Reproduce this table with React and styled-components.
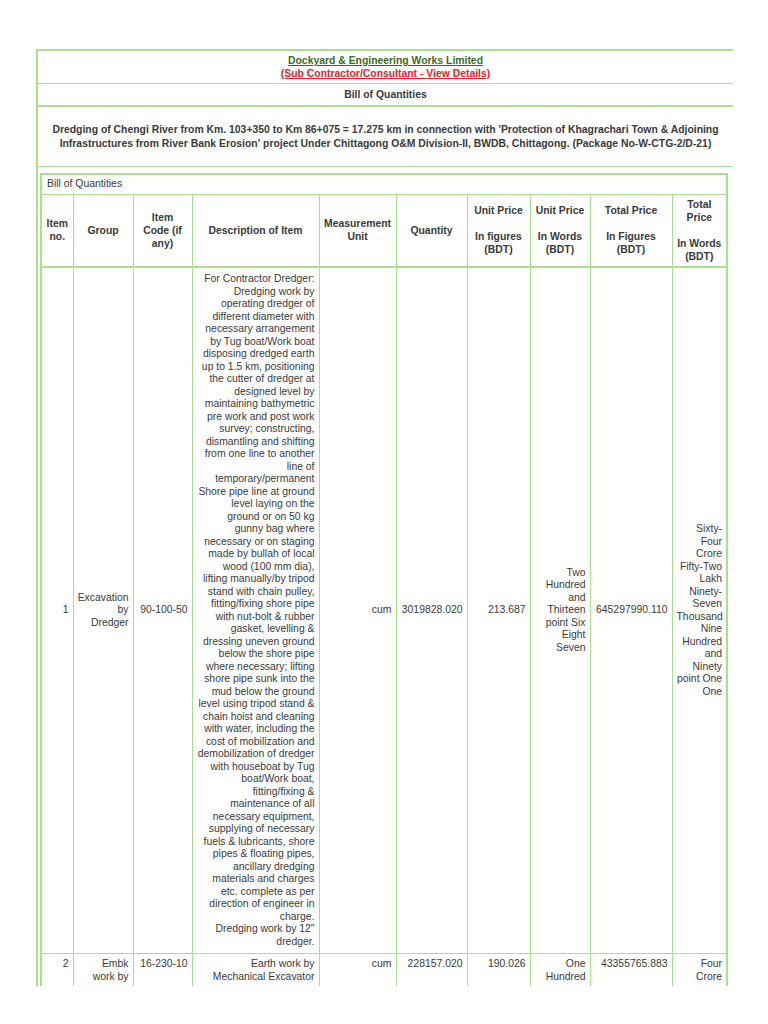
import React from "react"
import styled, { createGlobalStyle } from "styled-components"

const GlobalStyle = createGlobalStyle`
  body {
    margin: 0;
    background: #fff;
    font-family: "Liberation Sans", Arial, sans-serif;
    color: #3a3a3a;
  }
`

const line = "#a9df8d"

const Screen = styled.div`
  height: 986px;
  overflow: hidden;
  padding: 49px 0 0 36px;
  box-sizing: border-box;
`

const Outer = styled.div`
  width: 697px;
  border-top: 2px solid ${line};
  border-left: 2px solid ${line};
  box-sizing: border-box;
`

const Band = styled.div`
  height: ${p => p.h}px;
  border-bottom: ${p => p.thick ? 2 : 1}px solid ${line};
  box-sizing: border-box;
  display: flex;
  flex-direction: column;
  justify-content: center;
  align-items: center;
  text-align: center;
  font-size: 10.4px;
  font-weight: 700;
  line-height: ${p => p.lh || 13}px;
  padding: 0 8px;
`

const Company = styled.a`
  color: #3d6b1e;
  text-decoration: underline;
`

const SubLink = styled.a`
  color: #e8202a;
  text-decoration: underline;
`

const Holder = styled.div`
  padding: 6px 6px 0 2px;
`

const Grid = styled.table`
  width: 686px;
  table-layout: fixed;
  border-collapse: collapse;
  border: 2px solid ${line};
  font-size: 10.4px;
  line-height: 12.5px;
`

const Caption = styled.td`
  height: 20px;
  padding: 0 5px;
  border: 1px solid ${line};
  box-sizing: border-box;
  text-align: left;
  vertical-align: middle;
`

const Head = styled.th`
  border: 1px solid ${line};
  border-bottom: 2px solid ${line};
  padding: 2px 4px;
  height: 73px;
  box-sizing: border-box;
  font-weight: 700;
  line-height: 13px;
  text-align: center;
  vertical-align: middle;
`

const Cell = styled.td`
  border: 1px solid ${line};
  padding: ${p => p.top ? "4px 4px 40px" : "5px 4px"};
  padding-left: ${p => p.wide ? 5 : 4}px;
  text-align: right;
  vertical-align: ${p => p.top ? "top" : "middle"};
`

const widths = [32, 60, 59, 127, 77, 71, 63, 60, 82, 55]

const heads = [
  ["Item no."],
  ["Group"],
  ["Item Code (if any)"],
  ["Description of Item"],
  ["Measurement Unit"],
  ["Quantity"],
  ["Unit Price", "In figures (BDT)"],
  ["Unit Price", "In Words (BDT)"],
  ["Total Price", "In Figures (BDT)"],
  ["Total Price", "In Words (BDT)"],
]

const rows = [
  {
    top: false,
    cells: [
      "1",
      "Excavation by Dredger",
      "90-100-50",
      "For Contractor Dredger: Dredging work by operating dredger of different diameter with necessary arrangement by Tug boat/Work boat disposing dredged earth up to 1.5 km, positioning the cutter of dredger at designed level by maintaining bathymetric pre work and post work survey; constructing, dismantling and shifting from one line to another line of temporary/permanent Shore pipe line at ground level laying on the ground or on 50 kg gunny bag where necessary or on staging made by bullah of local wood (100 mm dia), lifting manually/by tripod stand with chain pulley, fitting/fixing shore pipe with nut-bolt & rubber gasket, levelling & dressing uneven ground below the shore pipe where necessary; lifting shore pipe sunk into the mud below the ground level using tripod stand & chain hoist and cleaning with water, including the cost of mobilization and demobilization of dredger with houseboat by Tug boat/Work boat, fitting/fixing & maintenance of all necessary equipment, supplying of necessary fuels & lubricants, shore pipes & floating pipes, ancillary dredging materials and charges etc. complete as per direction of engineer in charge.\nDredging work by 12\" dredger.",
      "cum",
      "3019828.020",
      "213.687",
      "Two Hundred and Thirteen point Six Eight Seven",
      "645297990.110",
      "Sixty-Four Crore Fifty-Two Lakh Ninety-Seven Thousand Nine Hundred and Ninety point One One",
    ],
  },
  {
    top: true,
    cells: [
      "2",
      "Embk work by",
      "16-230-10",
      "Earth work by Mechanical Excavator",
      "cum",
      "228157.020",
      "190.026",
      "One Hundred",
      "43355765.883",
      "Four Crore",
    ],
  },
]

const Multi = ({ text }) =>
  text.split("\n").map((part, i) => (
    <React.Fragment key={i}>
      {i > 0 && <br />}
      {part}
    </React.Fragment>
  ))

export default function App() {
  return (
    <Screen>
      <GlobalStyle />
      <Outer>
        <Band h={33}>
          <Company href="#">Dockyard &amp; Engineering Works Limited</Company>
          <SubLink href="#">(Sub Contractor/Consultant - View Details)</SubLink>
        </Band>
        <Band h={23} thick>
          Bill of Quantities
        </Band>
        <Band h={60} lh={14}>
          Dredging of Chengi River from Km. 103+350 to Km 86+075 = 17.275 km in connection with 'Protection of
          Khagrachari Town &amp; Adjoining Infrastructures from River Bank Erosion' project Under Chittagong O&amp;M
          Division-II, BWDB, Chittagong. (Package No-W-CTG-2/D-21)
        </Band>
        <Holder>
          <Grid>
            <colgroup>
              {widths.map((w, i) => (
                <col key={i} style={{ width: w }} />
              ))}
            </colgroup>
            <tbody>
              <tr>
                <Caption colSpan={10}>Bill of Quantities</Caption>
              </tr>
              <tr>
                {heads.map((h, i) => (
                  <Head key={i}>
                    {h[0]}
                    {h[1] && (
                      <>
                        <br />
                        <br />
                        {h[1]}
                      </>
                    )}
                  </Head>
                ))}
              </tr>
              {rows.map((r, i) => (
                <tr key={i}>
                  {r.cells.map((c, j) => (
                    <Cell key={j} top={r.top} wide={j === 3}>
                      <Multi text={c} />
                    </Cell>
                  ))}
                </tr>
              ))}
            </tbody>
          </Grid>
        </Holder>
      </Outer>
    </Screen>
  )
}
